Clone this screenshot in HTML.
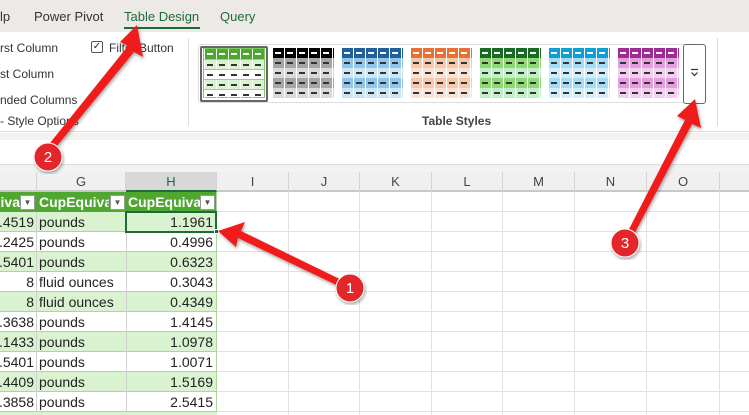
<!DOCTYPE html>
<html><head><meta charset="utf-8"><style>
*{box-sizing:border-box;margin:0;padding:0}
body{width:749px;height:415px;overflow:hidden;position:relative;background:#fff;font-family:"Liberation Sans",sans-serif;color:#222}
.a{position:absolute}
.tab{position:absolute;top:9px;font-size:13px;color:#333}
.rb{font-size:12px;color:#333;position:absolute}
.th{position:absolute;top:48px;width:62px;height:50px;}
.th .r{height:10px;position:relative;background-image:repeating-linear-gradient(90deg,#fff 0 1px,transparent 1px 12px)}
.th .r:after{content:"";position:absolute;left:3px;right:2px;top:4px;height:2px;background:repeating-linear-gradient(90deg,var(--d) 0 6px,transparent 6px 12px)}
.cell{position:absolute;height:20px;font-size:14px;line-height:20px;white-space:nowrap;overflow:hidden}
.f{position:absolute;left:0;width:36px;height:20px;overflow:hidden;font-size:14px;line-height:20px;white-space:nowrap}
.f span{position:absolute;right:2px;top:0}
.ch{position:absolute;top:172px;height:20px;font-size:13px;line-height:20px;text-align:center;color:#444;border-right:1px solid #d4d4d4}
</style></head><body>
<div class="a" style="left:0;top:0;width:749px;height:32px;background:#ede9e6"></div>
<div class="tab" style="left:0">lp</div>
<div class="tab" style="left:34px">Power Pivot</div>
<div class="tab" style="left:124px;color:#1e6b3a">Table Design</div>
<div class="a" style="left:124px;top:27px;width:76px;height:2px;background:#1e6b3a"></div>
<div class="tab" style="left:220px;color:#1e6b3a">Query</div>
<div class="a" style="left:0;top:32px;width:749px;height:100px;background:#fff;border-bottom:1px solid #ddd"></div>
<div class="rb" style="left:0;top:41px">rst Column</div>
<div class="rb" style="left:0;top:67px">st Column</div>
<div class="rb" style="left:0;top:93px">nded Columns</div>
<div class="rb" style="left:0;top:114px">- Style Options</div>
<div class="a" style="left:91px;top:41px;width:12px;height:12px;border:1px solid #555;border-radius:2px;font-size:10px;line-height:10px;text-align:center">✓</div>
<div class="rb" style="left:109px;top:41px">Filter Button</div>
<div class="a" style="left:188px;top:38px;width:1px;height:88px;background:#ddd"></div>
<div class="a" style="left:717px;top:38px;width:1px;height:88px;background:#ddd"></div>
<div class="a" style="left:198px;top:44px;width:486px;height:59px;border:1px solid #ddd;border-right:none;border-radius:3px 0 0 3px"></div>
<div class="a" style="left:683px;top:44px;width:23px;height:60px;border:1px solid #666;border-radius:3px"></div>
<svg class="a" style="left:689px;top:68px" width="12" height="10"><path d="M2 1.5H9" stroke="#333" stroke-width="1.2"/><path d="M2.5 4.5L5.5 7.5L8.5 4.5" stroke="#333" stroke-width="1.2" fill="none"/></svg>
<div class="rb" style="left:422px;top:114px;font-weight:bold;color:#444">Table Styles</div>
<div class="a" style="left:200px;top:46px;width:68px;height:56px;border:2px solid #666;border-radius:2px"></div>

<div class="th" style="left:203px;border:1px solid #7fc964;--d:#333">
<div class="r" style="background-color:#4ea72e;--d:#fff"></div><div class="r" style="background-color:#d9f2d0;--d:#333;border-top:1px solid #8ed973"></div><div class="r" style="--d:#333;border-top:1px solid #8ed973"></div><div class="r" style="background-color:#d9f2d0;--d:#333;border-top:1px solid #8ed973"></div><div class="r" style="--d:#333;border-top:1px solid #8ed973"></div></div>
<div class="th" style="left:272px;--d:#333"><div class="r" style="background-color:#000;--d:#fff"></div><div class="r" style="background-color:#a6a6a6"></div><div class="r" style="background-color:#d9d9d9"></div><div class="r" style="background-color:#a6a6a6"></div><div class="r" style="background-color:#d9d9d9"></div></div>
<div class="th" style="left:341px;--d:#333"><div class="r" style="background-color:#215f9a;--d:#fff"></div><div class="r" style="background-color:#8fc6ea"></div><div class="r" style="background-color:#cde6f6"></div><div class="r" style="background-color:#8fc6ea"></div><div class="r" style="background-color:#cde6f6"></div></div>
<div class="th" style="left:410px;--d:#333"><div class="r" style="background-color:#e97132;--d:#fff"></div><div class="r" style="background-color:#f7c7ac"></div><div class="r" style="background-color:#fbe2d5"></div><div class="r" style="background-color:#f7c7ac"></div><div class="r" style="background-color:#fbe2d5"></div></div>
<div class="th" style="left:479px;--d:#333"><div class="r" style="background-color:#196b24;--d:#fff"></div><div class="r" style="background-color:#8ed973"></div><div class="r" style="background-color:#c1f0c8"></div><div class="r" style="background-color:#8ed973"></div><div class="r" style="background-color:#c1f0c8"></div></div>
<div class="th" style="left:548px;--d:#333"><div class="r" style="background-color:#0f9ed5;--d:#fff"></div><div class="r" style="background-color:#a3dcf5"></div><div class="r" style="background-color:#d1eefa"></div><div class="r" style="background-color:#a3dcf5"></div><div class="r" style="background-color:#d1eefa"></div></div>
<div class="th" style="left:617px;--d:#333"><div class="r" style="background-color:#a02b93;--d:#fff"></div><div class="r" style="background-color:#e59edd"></div><div class="r" style="background-color:#f2cfee"></div><div class="r" style="background-color:#e59edd"></div><div class="r" style="background-color:#f2cfee"></div></div>

<div class="a" style="left:0;top:133px;width:749px;height:7px;background:#f3f2f1"></div>
<div class="a" style="left:0;top:140px;width:749px;height:25px;background:#fff;border-bottom:1px solid #ddd"></div>
<div class="a" style="left:0;top:165px;width:749px;height:7px;background:#f3f2f1"></div>
<div class="a" style="left:0;top:172px;width:749px;height:20px;background:#f0f0f0;border-bottom:2px solid #c8c8c8"></div>
<div class="ch" style="left:0;width:37px"></div>
<div class="ch" style="left:37px;width:89px">G</div>
<div class="ch" style="left:126px;width:91px;background:#d8d8d8;border-bottom:2px solid #1e6b3a;color:#1e6b3a">H</div>
<div class="ch" style="left:217px;width:72px">I</div>
<div class="ch" style="left:289px;width:71px">J</div>
<div class="ch" style="left:360px;width:72px">K</div>
<div class="ch" style="left:432px;width:71px">L</div>
<div class="ch" style="left:503px;width:72px">M</div>
<div class="ch" style="left:575px;width:72px">N</div>
<div class="ch" style="left:647px;width:73px">O</div>
<div class="a" style="left:217px;top:192px;width:532px;height:223px;background-image:repeating-linear-gradient(180deg,transparent 0 19px,#e1e1e1 19px 20px),linear-gradient(90deg,transparent 71px,#e1e1e1 71px 72px,transparent 72px 142px,#e1e1e1 142px 143px,transparent 143px 214px,#e1e1e1 214px 215px,transparent 215px 285px,#e1e1e1 285px 286px,transparent 286px 357px,#e1e1e1 357px 358px,transparent 358px 429px,#e1e1e1 429px 430px,transparent 430px 502px,#e1e1e1 502px 503px,transparent 503px)"></div>
<div class="a" style="left:0;top:192px;width:217px;height:20px;background:#4ea72e"></div>
<div class="a" style="left:0;top:212px;width:217px;height:200px;background-image:repeating-linear-gradient(180deg,#d9f2d0 0 19px,#a9d89a 19px 20px,#fff 20px 39px,#a9d89a 39px 40px)"></div>
<div class="f" style="top:192px;width:20px;color:#fff;font-weight:bold"><span style="right:0">CupEquiva</span></div>
<div class="cell" style="left:39px;top:192px;width:70px;color:#fff;font-weight:bold">CupEquiva</div>
<div class="cell" style="left:128px;top:192px;width:72px;color:#fff;font-weight:bold">CupEquiva</div>
<div class="a" style="left:20px;top:195px;width:15px;height:15px;background:#fff;border:1px solid #999;font-size:8px;text-align:center;line-height:13px;color:#555">▼</div>
<div class="a" style="left:110px;top:195px;width:15px;height:15px;background:#fff;border:1px solid #999;font-size:8px;text-align:center;line-height:13px;color:#555">▼</div>
<div class="a" style="left:200px;top:195px;width:15px;height:15px;background:#fff;border:1px solid #999;font-size:8px;text-align:center;line-height:13px;color:#555">▼</div>
<div class="a" style="left:36px;top:212px;width:1px;height:203px;background:#d0d0d0"></div>
<div class="a" style="left:126px;top:212px;width:1px;height:203px;background:#d0d0d0"></div>
<div class="a" style="left:216px;top:192px;width:1px;height:223px;background:#a9d89a"></div>
<div class="a" style="left:0;top:412px;width:217px;height:3px;background:#d9f2d0"></div>
<div style="position:absolute;left:0;top:212px">
<div class="f" style="top:0"><span>1.4519</span></div><div class="cell" style="left:39px;top:0">pounds</div><div class="cell" style="left:126px;top:0;width:87px;text-align:right">1.1961</div>
<div class="f" style="top:20px"><span>1.2425</span></div><div class="cell" style="left:39px;top:20px">pounds</div><div class="cell" style="left:126px;top:20px;width:87px;text-align:right">0.4996</div>
<div class="f" style="top:40px"><span>1.5401</span></div><div class="cell" style="left:39px;top:40px">pounds</div><div class="cell" style="left:126px;top:40px;width:87px;text-align:right">0.6323</div>
<div class="f" style="top:60px"><span>8</span></div><div class="cell" style="left:39px;top:60px">fluid ounces</div><div class="cell" style="left:126px;top:60px;width:87px;text-align:right">0.3043</div>
<div class="f" style="top:80px"><span>8</span></div><div class="cell" style="left:39px;top:80px">fluid ounces</div><div class="cell" style="left:126px;top:80px;width:87px;text-align:right">0.4349</div>
<div class="f" style="top:100px"><span>1.3638</span></div><div class="cell" style="left:39px;top:100px">pounds</div><div class="cell" style="left:126px;top:100px;width:87px;text-align:right">1.4145</div>
<div class="f" style="top:120px"><span>1.1433</span></div><div class="cell" style="left:39px;top:120px">pounds</div><div class="cell" style="left:126px;top:120px;width:87px;text-align:right">1.0978</div>
<div class="f" style="top:140px"><span>1.5401</span></div><div class="cell" style="left:39px;top:140px">pounds</div><div class="cell" style="left:126px;top:140px;width:87px;text-align:right">1.0071</div>
<div class="f" style="top:160px"><span>1.4409</span></div><div class="cell" style="left:39px;top:160px">pounds</div><div class="cell" style="left:126px;top:160px;width:87px;text-align:right">1.5169</div>
<div class="f" style="top:180px"><span>1.3858</span></div><div class="cell" style="left:39px;top:180px">pounds</div><div class="cell" style="left:126px;top:180px;width:87px;text-align:right">2.5415</div>
</div>
<div class="a" style="left:125px;top:211px;width:92px;height:22px;border:2px solid #1e6b3a"></div>
<div class="a" style="left:214px;top:229px;width:5px;height:5px;background:#1e6b3a;border:1px solid #fff"></div>
<svg class="a" style="left:0;top:0" width="749" height="415">
<defs><filter id="s"><feDropShadow dx="1" dy="2" stdDeviation="1.5" flood-opacity=".35"/></filter></defs>
<g fill="#f01c1c" filter="url(#s)">
<path d="M137 25 L143 57 L134 52 L52 152 L46 148 L128 46 L120 42 Z"/>
<path d="M695 99 L701 128 L692 124 L630 242 L624 239 L685 120 L677 116 Z"/>
<path d="M218 231 L245 222 L241 231 L352 285 L349 291 L238 238 L236 247 Z"/>
</g>
<g font-family="Liberation Sans" font-size="15" fill="#fff" text-anchor="middle">
<circle cx="48" cy="157" r="14" fill="#e3262a" stroke="#fff" stroke-width="1" filter="url(#s)"/><text x="48" y="162">2</text>
<circle cx="625" cy="243" r="14" fill="#e3262a" stroke="#fff" stroke-width="1" filter="url(#s)"/><text x="625" y="248">3</text>
<circle cx="350" cy="288" r="14" fill="#e3262a" stroke="#fff" stroke-width="1" filter="url(#s)"/><text x="350" y="293">1</text>
</g>
</svg>
</body></html>
